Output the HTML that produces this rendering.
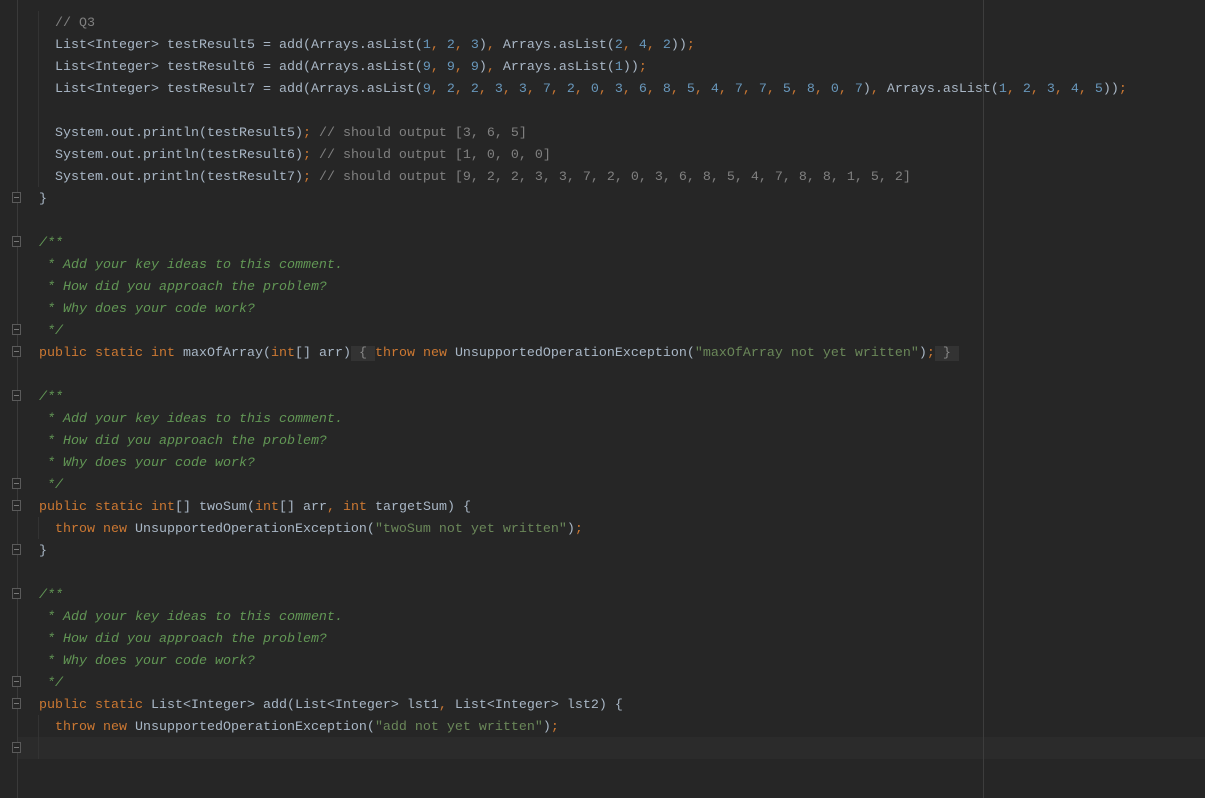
<!DOCTYPE html>
<html><head><style>
body{margin:0;background:#262626;width:1205px;height:798px;overflow:hidden;position:relative;font-family:"Liberation Mono",monospace;font-size:13.33px;color:#a9b7c6}
.l{position:absolute;left:39px;height:22px;line-height:22px;white-space:pre;margin-top:2px}
.k{color:#cc7832}.n{color:#6897bb}.c{color:#808080}.d{color:#629755;font-style:italic}.s{color:#6a8759}
.gut{position:absolute;left:17px;top:0;width:1px;height:798px;background:#3a3a3a}
.mar{position:absolute;left:983px;top:0;width:1px;height:798px;background:#3d3d3d}
.cur{position:absolute;left:18px;top:737px;width:1187px;height:22px;background:#2b2b2b}
.f{position:absolute;left:12px;width:9px;height:11px;box-sizing:border-box;border:1px solid #5a5a5a;background:#262626}
.f::after{content:"";position:absolute;left:1px;top:4px;width:5px;height:1px;background:#777}
.b{background:#333;color:#888}
.g{position:absolute;left:38px;width:1px;background:#333}
</style></head><body>
<div class="cur"></div>
<div class="gut"></div><div class="mar"></div>
<div class="g" style="top:11px;height:176px"></div>
<div class="g" style="top:517px;height:22px"></div>
<div class="g" style="top:715px;height:44px"></div>
<div class="l" style="top:11px">  <span class="c">// Q3</span></div>
<div class="l" style="top:33px">  List&lt;Integer&gt; testResult5 = add(Arrays.asList(<span class="n">1</span><span class="k">, </span><span class="n">2</span><span class="k">, </span><span class="n">3</span>)<span class="k">, </span>Arrays.asList(<span class="n">2</span><span class="k">, </span><span class="n">4</span><span class="k">, </span><span class="n">2</span>))<span class="k">;</span></div>
<div class="l" style="top:55px">  List&lt;Integer&gt; testResult6 = add(Arrays.asList(<span class="n">9</span><span class="k">, </span><span class="n">9</span><span class="k">, </span><span class="n">9</span>)<span class="k">, </span>Arrays.asList(<span class="n">1</span>))<span class="k">;</span></div>
<div class="l" style="top:77px">  List&lt;Integer&gt; testResult7 = add(Arrays.asList(<span class="n">9</span><span class="k">, </span><span class="n">2</span><span class="k">, </span><span class="n">2</span><span class="k">, </span><span class="n">3</span><span class="k">, </span><span class="n">3</span><span class="k">, </span><span class="n">7</span><span class="k">, </span><span class="n">2</span><span class="k">, </span><span class="n">0</span><span class="k">, </span><span class="n">3</span><span class="k">, </span><span class="n">6</span><span class="k">, </span><span class="n">8</span><span class="k">, </span><span class="n">5</span><span class="k">, </span><span class="n">4</span><span class="k">, </span><span class="n">7</span><span class="k">, </span><span class="n">7</span><span class="k">, </span><span class="n">5</span><span class="k">, </span><span class="n">8</span><span class="k">, </span><span class="n">0</span><span class="k">, </span><span class="n">7</span>)<span class="k">, </span>Arrays.asList(<span class="n">1</span><span class="k">, </span><span class="n">2</span><span class="k">, </span><span class="n">3</span><span class="k">, </span><span class="n">4</span><span class="k">, </span><span class="n">5</span>))<span class="k">;</span></div>
<div class="l" style="top:121px">  System.out.println(testResult5)<span class="k">;</span> <span class="c">// should output [3, 6, 5]</span></div>
<div class="l" style="top:143px">  System.out.println(testResult6)<span class="k">;</span> <span class="c">// should output [1, 0, 0, 0]</span></div>
<div class="l" style="top:165px">  System.out.println(testResult7)<span class="k">;</span> <span class="c">// should output [9, 2, 2, 3, 3, 7, 2, 0, 3, 6, 8, 5, 4, 7, 8, 8, 1, 5, 2]</span></div>
<div class="l" style="top:187px">}</div>
<div class="l d" style="top:231px">/**</div>
<div class="l d" style="top:253px"> * Add your key ideas to this comment.</div>
<div class="l d" style="top:275px"> * How did you approach the problem?</div>
<div class="l d" style="top:297px"> * Why does your code work?</div>
<div class="l d" style="top:319px"> */</div>
<div class="l" style="top:341px"><span class="k">public static int </span>maxOfArray(<span class="k">int</span>[] arr)<span class="b"> { </span><span class="k">throw new </span>UnsupportedOperationException(<span class="s">"maxOfArray not yet written"</span>)<span class="k">;</span><span class="b"> } </span></div>
<div class="l d" style="top:385px">/**</div>
<div class="l d" style="top:407px"> * Add your key ideas to this comment.</div>
<div class="l d" style="top:429px"> * How did you approach the problem?</div>
<div class="l d" style="top:451px"> * Why does your code work?</div>
<div class="l d" style="top:473px"> */</div>
<div class="l" style="top:495px"><span class="k">public static int</span>[] twoSum(<span class="k">int</span>[] arr<span class="k">, int </span>targetSum) {</div>
<div class="l" style="top:517px">  <span class="k">throw new </span>UnsupportedOperationException(<span class="s">"twoSum not yet written"</span>)<span class="k">;</span></div>
<div class="l" style="top:539px">}</div>
<div class="l d" style="top:583px">/**</div>
<div class="l d" style="top:605px"> * Add your key ideas to this comment.</div>
<div class="l d" style="top:627px"> * How did you approach the problem?</div>
<div class="l d" style="top:649px"> * Why does your code work?</div>
<div class="l d" style="top:671px"> */</div>
<div class="l" style="top:693px"><span class="k">public static </span>List&lt;Integer&gt; add(List&lt;Integer&gt; lst1<span class="k">, </span>List&lt;Integer&gt; lst2) {</div>
<div class="l" style="top:715px">  <span class="k">throw new </span>UnsupportedOperationException(<span class="s">"add not yet written"</span>)<span class="k">;</span></div>
<div class="f" style="top:192px"></div>
<div class="f" style="top:236px"></div>
<div class="f" style="top:324px"></div>
<div class="f" style="top:346px"></div>
<div class="f" style="top:390px"></div>
<div class="f" style="top:478px"></div>
<div class="f" style="top:500px"></div>
<div class="f" style="top:544px"></div>
<div class="f" style="top:588px"></div>
<div class="f" style="top:676px"></div>
<div class="f" style="top:698px"></div>
<div class="f" style="top:742px"></div>
</body></html>
